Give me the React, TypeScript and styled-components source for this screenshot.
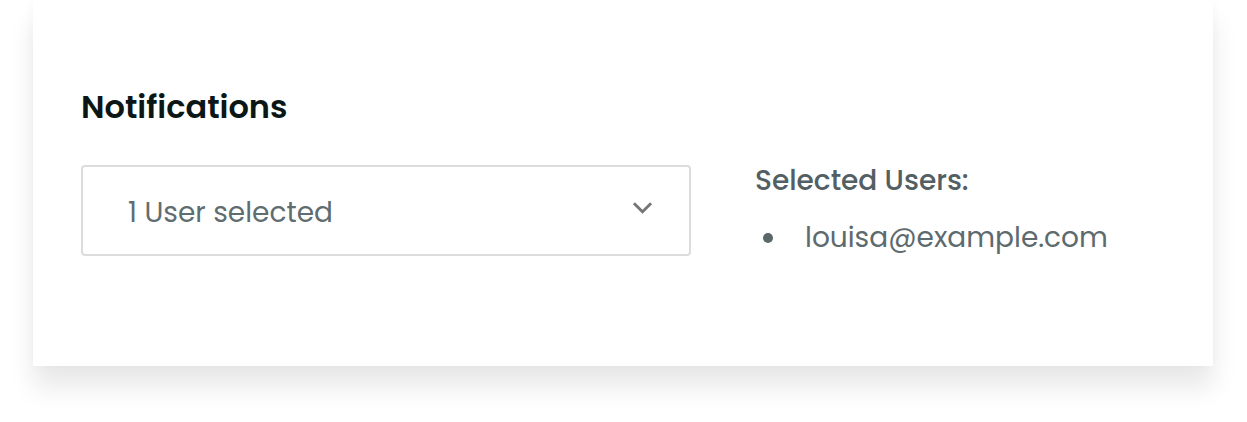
import React from 'react'
import styled, { createGlobalStyle } from 'styled-components'

const GlobalStyle = createGlobalStyle`
  html, body {
    margin: 0;
    padding: 0;
    background: #ffffff;
  }
  body {
    font-family: 'Poppins', 'Inter', 'Noto Sans', sans-serif;
  }
`

function App() {
  const users = ['louisa@example.com']
  return (
    <>
      <GlobalStyle />
      <Page>
        <Card>
          <Title>Notifications</Title>
          <Row>
            <Select>
              <SelectText>{users.length} User selected</SelectText>
              <Chevron viewBox="0 0 22 13">
                <path d="M2 2l9 9 9-9" />
              </Chevron>
            </Select>
            <Selected>
              <Label>Selected Users:</Label>
              <UserList>
                {users.map(u => (
                  <UserItem key={u}>{u}</UserItem>
                ))}
              </UserList>
            </Selected>
          </Row>
        </Card>
      </Page>
    </>
  )
}

export default App

const Page = styled.div`
  height: 422px;
  padding: 0 34px 0 33px;
`
const Card = styled.div`
  background: #ffffff;
  height: 366px;
  box-sizing: border-box;
  padding: 87px 48px 0 48px;
  box-shadow: 0 22px 24px rgba(0, 0, 0, 0.09), 0 0 10px rgba(0, 0, 0, 0.03);
`
const Title = styled.h2`
  margin: 0 0 38px 0;
  font-size: 32px;
  line-height: 40px;
  font-weight: 600;
  color: #0b1616;
`
const Row = styled.div`
  display: flex;
  align-items: flex-start;
  gap: 64px;
`
const Select = styled.div`
  width: 610px;
  height: 91px;
  box-sizing: border-box;
  border: 2px solid #dcdcdc;
  border-radius: 4px;
  display: flex;
  align-items: center;
  justify-content: space-between;
  padding: 0 36px 0 45px;
`
const SelectText = styled.span`
  font-size: 28px;
  line-height: 36px;
  color: #5f6d71;
  margin-top: 4px;
`
const Chevron = styled.svg`
  width: 21px;
  height: 13px;
  fill: none;
  stroke: #757575;
  stroke-width: 3;
  margin-top: -6px;
`
const Selected = styled.div`
  display: flex;
  flex-direction: column;
`
const Label = styled.div`
  font-size: 28px;
  font-weight: 500;
  line-height: 32px;
  color: #535f63;
`
const UserList = styled.ul`
  list-style: none;
  margin: 21px 0 0 0;
  padding: 0;
`
const UserItem = styled.li`
  position: relative;
  padding-left: 50px;
  font-size: 28px;
  line-height: 40px;
  color: #5d6a6e;
  &::before {
    content: '';
    position: absolute;
    left: 8px;
    top: 15px;
    width: 10px;
    height: 10px;
    border-radius: 50%;
    background: #5a676b;
  }
`
